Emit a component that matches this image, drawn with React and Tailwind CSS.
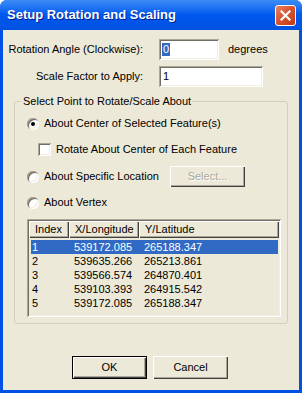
import React from 'react';

const font = { fontFamily: '"Liberation Sans", Arial, sans-serif' };

const rows = [
  ['1', '539172.085', '265188.347'],
  ['2', '539635.266', '265213.861'],
  ['3', '539566.574', '264870.401'],
  ['4', '539103.393', '264915.542'],
  ['5', '539172.085', '265188.347'],
];

const sunken =
  'shadow-[inset_1px_1px_#aca899,inset_-1px_-1px_#ffffff,inset_2px_2px_#716f64,inset_-2px_-2px_#f1efe2]';
const raised =
  'shadow-[inset_1px_1px_#ffffff,inset_-1px_-1px_#404040,inset_-2px_-2px_#aca899]';

const Radio = ({ checked }) => (
  <span className={`relative w-[12px] h-[12px] rounded-full bg-white shrink-0 ${sunken}`}>
    {checked && (
      <span className="absolute left-[4px] top-[4px] w-[4px] h-[4px] rounded-full bg-black" />
    )}
  </span>
);

const Button = ({ children, isDefault, disabled, className = '' }) => (
  <div
    className={`flex items-center justify-center bg-[#ece9d8] ${
      isDefault ? 'border border-black' : ''
    } ${className}`}
  >
    <div
      className={`w-full h-full flex items-center justify-center ${raised} ${
        disabled ? 'text-[#aca899] [text-shadow:1px_1px_#ffffff]' : 'text-black'
      }`}
    >
      {children}
    </div>
  </div>
);

export default function App() {
  return (
    <div
      className="w-[302px] h-[393px] flex flex-col bg-[#0050e6] rounded-t-[7px] overflow-hidden text-[11px] text-black"
      style={font}
    >
      {/* title bar */}
      <div className="h-[30px] shrink-0 flex items-center justify-between pl-[7px] pr-[6px] bg-gradient-to-b from-[#3b8cf5] via-[#0058ee] to-[#0052e0]">
        <span className="text-white font-bold text-[13px] [text-shadow:1px_1px_#0a1e8c]">
          Setup Rotation and Scaling
        </span>
        <div className="w-[21px] h-[21px] rounded-[3px] border border-white bg-gradient-to-br from-[#e8805f] via-[#d8502c] to-[#c23b14] flex items-center justify-center">
          <svg width="11" height="11" viewBox="0 0 11 11">
            <path d="M1.5 1.5 L9.5 9.5 M9.5 1.5 L1.5 9.5" stroke="#fff" strokeWidth="2.2" strokeLinecap="square" />
          </svg>
        </div>
      </div>

      {/* client area */}
      <div className="mx-[3px] mb-[3px] flex-1 bg-[#ece9d8] flex flex-col pt-[9px]">
        <div className="flex items-center h-[21px]">
          <span className="w-[140px] text-right">Rotation Angle (Clockwise):</span>
          <div className={`ml-[16px] w-[60px] h-[21px] bg-white flex items-center pl-[3px] ${sunken}`}>
            <span className="bg-[#316ac5] text-white px-[1px] leading-[13px]">0</span>
          </div>
          <span className="ml-[9px]">degrees</span>
        </div>
        <div className="flex items-center h-[21px] mt-[6px]">
          <span className="w-[140px] text-right">Scale Factor to Apply:</span>
          <div className={`ml-[16px] w-[104px] h-[21px] bg-white flex items-center pl-[4px] ${sunken}`}>
            1
          </div>
        </div>

        {/* group box */}
        <fieldset className="ml-[11px] mt-[8px] w-[274px] border border-[#d0d0bf] rounded-[3px] pb-[6px]">
          <legend className="ml-[7px] px-[1px] leading-[13px]">Select Point to Rotate/Scale About</legend>
          <div className="pl-[12px] pt-[9px] flex flex-col">
            <div className="flex items-center h-[13px] gap-[5px]">
              <Radio checked />
              <span>About Center of Selected Feature(s)</span>
            </div>
            <div className="flex items-center h-[13px] gap-[5px] mt-[13px] pl-[11px]">
              <span className={`w-[13px] h-[13px] bg-white ${sunken}`} />
              <span>Rotate About Center of Each Feature</span>
            </div>
            <div className="flex items-center h-[21px] mt-[10px]">
              <Radio />
              <span className="ml-[5px] w-[126px]">About Specific Location</span>
              <Button disabled className="w-[75px] h-[21px]">
                Select...
              </Button>
            </div>
            <div className="flex items-center h-[13px] gap-[5px] mt-[9px]">
              <Radio />
              <span>About Vertex</span>
            </div>

            {/* list view */}
            <div className={`mt-[10px] w-[254px] h-[98px] bg-[#ece9d8] p-[2px] ${sunken}`}>
              <div className="flex h-[17px]">
                <div className={`w-[40px] pl-[6px] flex items-center ${raised}`}>Index</div>
                <div className={`w-[70px] pl-[6px] flex items-center ${raised}`}>X/Longitude</div>
                <div className={`flex-1 pl-[6px] flex items-center ${raised}`}>Y/Latitude</div>
              </div>
              <div className="mt-[2px] pl-[2px] pr-[1px]">
                {rows.map((r, i) => (
                  <div
                    key={i}
                    className={`flex h-[14px] items-center ${
                      i === 0 ? 'bg-[#316ac5] text-white' : ''
                    }`}
                  >
                    <span className="w-[43px] pl-[1px]">{r[0]}</span>
                    <span className="w-[70px]">{r[1]}</span>
                    <span>{r[2]}</span>
                  </div>
                ))}
              </div>
            </div>
          </div>
        </fieldset>

        <div className="flex justify-center gap-[6px] mt-[32px] pr-[2px]">
          <Button isDefault className="w-[75px] h-[23px]">
            OK
          </Button>
          <Button className="w-[75px] h-[23px]">Cancel</Button>
        </div>
      </div>
    </div>
  );
}
